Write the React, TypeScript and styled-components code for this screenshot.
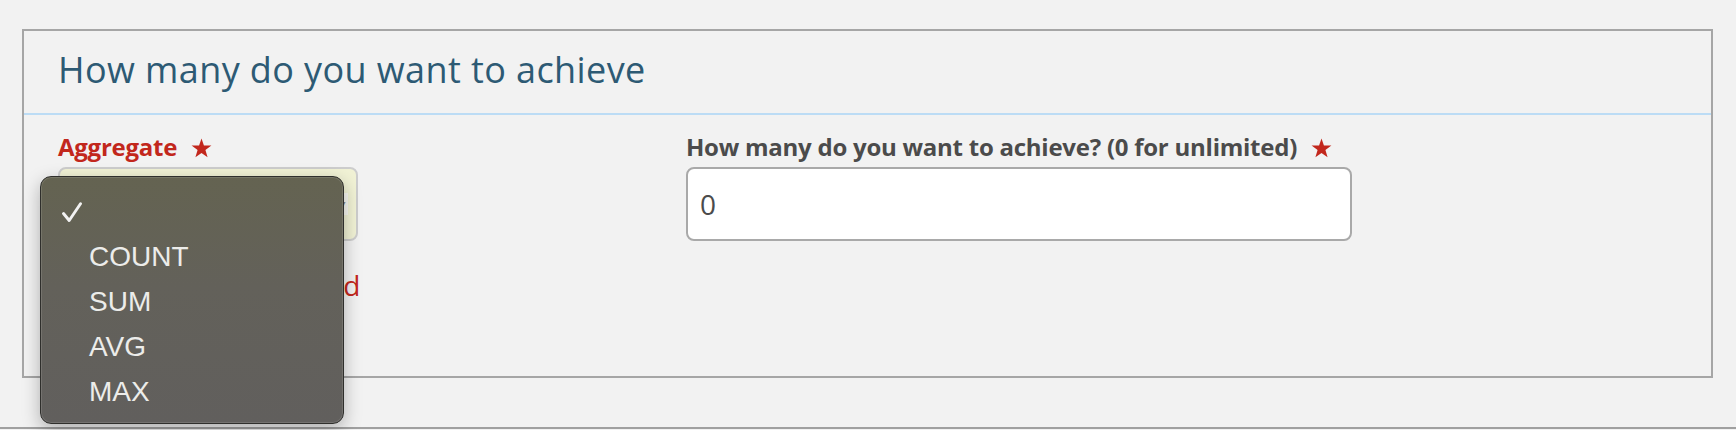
import React from 'react'
import styled, { createGlobalStyle } from 'styled-components'

const GlobalStyle = createGlobalStyle`
  html, body {
    margin: 0;
    padding: 0;
    background: #f2f2f2;
  }
  * {
    box-sizing: border-box;
  }
`

const OPTIONS = ['', 'COUNT', 'SUM', 'AVG', 'MAX']

const CheckMark = () => (
  <svg width="20" height="20" viewBox="0 0 20 20">
    <path
      d="M1.5 11.5 L7.2 18.5 L18.5 1.8"
      fill="none"
      stroke="#f2f2f2"
      strokeWidth="2.9"
      strokeLinecap="round"
      strokeLinejoin="round"
    />
  </svg>
)

// required marker
const Star = () => (
  <StarIcon width="21" height="20" viewBox="0 0 24 23">
    <path
      d="M12 0.5 L14.8 8.6 L23.4 8.7 L16.5 13.9 L19 22.2 L12 17.2 L5 22.2 L7.5 13.9 L0.6 8.7 L9.2 8.6 Z"
      fill="#c2271c"
    />
  </StarIcon>
)

const App = () => {
  return (
    <Page>
      <GlobalStyle />
      <Panel>
        <PanelHeader>
          <Heading>How many do you want to achieve</Heading>
        </PanelHeader>
        <PanelBody>
          <Field>
            <Label error>
              Aggregate
              <Star />
            </Label>
            <SelectWrap>
              <SelectBox>
                <Caret>▾</Caret>
              </SelectBox>
              <Menu>
                {OPTIONS.map((opt, i) => (
                  <MenuItem key={i}>
                    <CheckSlot>{i === 0 && <CheckMark />}</CheckSlot>
                    {opt}
                  </MenuItem>
                ))}
              </Menu>
            </SelectWrap>
            <ErrorText>This field is required</ErrorText>
          </Field>
          <Field>
            <Label>
              How many do you want to achieve? (0 for unlimited)
              <Star />
            </Label>
            <TextInput defaultValue="0" />
          </Field>
        </PanelBody>
      </Panel>
      <Rule />
    </Page>
  )
}

const Page = styled.div`
  display: flex;
  flex-direction: column;
  height: 430px;
  padding: 29px 23px 0 22px;
  font-family: 'Open Sans', 'Noto Sans', sans-serif;
`

const Panel = styled.div`
  height: 349px;
  border: 2px solid #a6a6a6;
  background: #f2f2f2;
`

const PanelHeader = styled.div`
  padding: 17px 34px 21px;
  border-bottom: 2px solid #bcdcf5;
`

const Heading = styled.h2`
  margin: 0;
  font-size: 36px;
  line-height: 44px;
  font-weight: 400;
  letter-spacing: 0.4px;
  color: #2d5a74;
`

const PanelBody = styled.div`
  display: grid;
  grid-template-columns: 628px 666px;
  padding: 18px 34px 0;
`

const Field = styled.div`
  display: flex;
  flex-direction: column;
`

const Label = styled.label<{ error?: boolean }>`
  display: flex;
  align-items: flex-start;
  height: 34px;
  font-size: 24px;
  line-height: 28px;
  font-weight: 700;
  letter-spacing: -0.25px;
  color: ${(p) => (p.error ? '#c2271c' : '#4b4b4b')};
`

const StarIcon = styled.svg`
  margin: 5px 0 0 14px;
  flex: none;
`

const SelectWrap = styled.div`
  position: relative;
  width: 300px;
  height: 74px;
`

const SelectBox = styled.div`
  display: flex;
  align-items: center;
  justify-content: flex-end;
  height: 100%;
  padding-right: 8px;
  background: #f1f2d5;
  border: 2px solid #cdcdcd;
  border-radius: 8px;
`

const Caret = styled.span`
  display: flex;
  align-items: center;
  justify-content: center;
  width: 12px;
  height: 22px;
  background: #f7f7f0;
  font-family: 'DejaVu Sans', sans-serif;
  font-size: 14px;
  color: #888;
`

const Menu = styled.div`
  position: absolute;
  left: -18px;
  top: 9px;
  width: 304px;
  height: 248px;
  padding: 12px 0 9px;
  background: linear-gradient(180deg, #646351 0%, #63615a 45%, #615f5d 100%);
  border: 1px solid #2f2f2c;
  border-radius: 11px;
  box-shadow: inset 0 0 0 1px rgba(255, 255, 255, 0.12), 0 6px 18px rgba(0, 0, 0, 0.28);
  z-index: 5;
`

const MenuItem = styled.div`
  display: flex;
  align-items: center;
  height: 45px;
  padding-left: 21px;
  font-family: 'Liberation Sans', Arial, sans-serif;
  font-size: 28px;
  line-height: 45px;
  color: #ececea;
`

const CheckSlot = styled.span`
  display: flex;
  align-items: center;
  width: 27px;
  height: 100%;
`

const ErrorText = styled.div`
  margin-top: 27px;
  font-size: 28px;
  line-height: 34px;
  letter-spacing: 1.8px;
  color: #c2271c;
`

const TextInput = styled.input`
  width: 666px;
  height: 74px;
  padding: 0 12px;
  background: #fff;
  border: 2px solid #a9a9a9;
  border-radius: 8px;
  font-family: 'Open Sans', 'Noto Sans', sans-serif;
  font-size: 28px;
  color: #4b4b4b;
  outline: none;
`

const Rule = styled.div`
  height: 2px;
  margin: 49px -23px 0 -22px;
  background: #a0a0a0;
`

export default App
